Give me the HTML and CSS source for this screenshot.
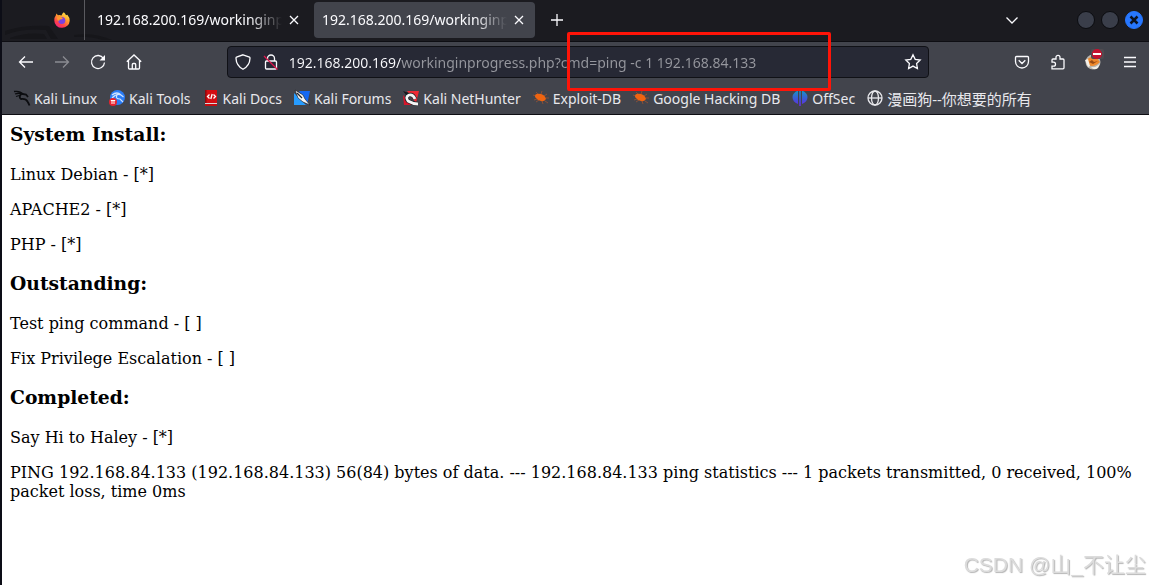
FILE: index.html
```
<!DOCTYPE html>
<html lang="en">
<head>
    <meta charset="UTF-8">
    <meta name="viewport" content="width=device-width, initial-scale=1.0">
    <title>192.168.200.169/workinginprogress.php</title>
    <link rel="stylesheet" href="styles.css">
</head>
<body>
    <div class="window">
        <!-- Tab bar -->
        <div class="tabbar">
            <svg class="wallpaper" width="110" height="16" viewBox="0 0 110 16" aria-hidden="true">
                <path d="M3 6Q20 0 47 1L56 14H49L44 5Q22 3 3 10zM8 13Q24 7 42 9L45 14H8zM72 10Q92 7 110 15H100Q88 11 72 12z"/>
            </svg>
            <button class="firefox-view" aria-label="Firefox View">
                <svg width="16" height="16" viewBox="0 0 16 16">
                    <defs>
                        <linearGradient id="fire" x1="0.8" y1="0" x2="0.2" y2="1">
                            <stop offset="0" stop-color="#fff04a"/>
                            <stop offset="0.4" stop-color="#ff9a2e"/>
                            <stop offset="0.75" stop-color="#ff3d4c"/>
                            <stop offset="1" stop-color="#f0208c"/>
                        </linearGradient>
                    </defs>
                    <path fill="url(#fire)" d="M9.800.200Q11.500 1.500 12 3.200L13.300 2.800Q15.800 5.500 15.700 8.800A7.700 7.200 0 0 1 .300 8.500Q.200 5.300 2 3L2.300 1.600L4 3.200Q6 2.700 7.500 3.600Q8 1.500 9.800.200z"/>
                    <circle cx="7.800" cy="8.600" r="3.500" fill="#7a42e0"/>
                    <path fill="#ff9a2e" d="M2.800 5.500Q5 4.300 7.500 5.300L9 6.300Q7.500 7.800 6 7.600Q5 7.800 5.200 9.200Q3 8.500 2.800 5.500z"/>
                </svg>
            </button>
            <div class="tabs">
                <div class="tab">
                    <span class="tab-title">192.168.200.169/workinginprogress.php</span>
                    <button class="tab-close" aria-label="Close tab"><svg width="10" height="10" viewBox="0 0 10 10"><path d="M1 1L9 9M9 1L1 9"/></svg></button>
                </div>
                <div class="tab selected">
                    <span class="tab-title">192.168.200.169/workinginprogress.php</span>
                    <button class="tab-close" aria-label="Close tab"><svg width="10" height="10" viewBox="0 0 10 10"><path d="M1 1L9 9M9 1L1 9"/></svg></button>
                </div>
            </div>
            <button class="icon-btn" aria-label="New tab"><svg width="14" height="14" viewBox="0 0 14 14"><path d="M7 1V13M1 7H13"/></svg></button>
            <button class="icon-btn all-tabs" aria-label="List all tabs"><svg width="14" height="14" viewBox="0 0 14 14"><path d="M1.500 4.500L7 10L12.500 4.500"/></svg></button>
            <div class="window-buttons">
                <button class="round" aria-label="Minimize"></button>
                <button class="round" aria-label="Maximize"></button>
                <button class="round close" aria-label="Close"><svg width="10" height="10" viewBox="0 0 10 10"><path d="M1.500 1.500L8.500 8.500M8.500 1.500L1.500 8.500"/></svg></button>
            </div>
        </div>

        <!-- Navigation -->
        <div class="navbar">
            <button class="icon-btn" aria-label="Back"><svg width="16" height="16" viewBox="0 0 16 16"><path d="M15 8H1.500M7 2.500L1.500 8L7 13.500"/></svg></button>
            <button class="icon-btn" aria-label="Forward" disabled><svg width="16" height="16" viewBox="0 0 16 16"><path d="M1 8H14.500M9 2.500L14.500 8L9 13.500"/></svg></button>
            <button class="icon-btn" aria-label="Reload"><svg width="16" height="16" viewBox="0 0 16 16"><path d="M13.500 4.500A6.500 6.500 0 1 0 14.500 8.500"/><path class="solid" d="M15 1V6.500H9.500z"/></svg></button>
            <button class="icon-btn" aria-label="Home"><svg width="16" height="16" viewBox="0 0 16 16"><path d="M.800 7.800L8 1L15.200 7.800M2.500 6.500V14Q2.500 15 3.500 15H12.500Q13.500 15 13.500 14V6.500M6.300 15V10.500Q6.300 9.500 7.300 9.500H8.700Q9.700 9.500 9.700 10.500V15"/></svg></button>
            <span class="spring"></span>
            <div class="urlbar">
                <svg width="16" height="16" viewBox="0 0 16 16"><path d="M8 .800L14.500 3.200Q15 3.400 15 4.200Q14.800 11.500 8 15.300Q1.200 11.500 1 4.200Q1 3.400 1.500 3.200z"/></svg>
                <svg class="lock" width="16" height="16" viewBox="0 0 16 16"><path d="M4.500 7V4.500A3.500 3.500 0 0 1 11.500 4.500V7M3.500 7H12.500Q13.500 7 13.500 8V14Q13.500 15 12.500 15H3.500Q2.500 15 2.500 14V8Q2.500 7 3.500 7z"/><path class="slash" d="M1 2L14.500 15.500"/></svg>
                <input class="url" type="text" aria-label="Address" value="192.168.200.169/workinginprogress.php?cmd=ping -c 1 192.168.84.133">
                <button class="star" aria-label="Bookmark this page"><svg width="18" height="18" viewBox="0 0 18 18"><path d="M9 1.800L11.200 6.300L16.200 7L12.600 10.500L13.400 15.500L9 13.100L4.600 15.500L5.400 10.500L1.800 7L6.800 6.300z"/></svg></button>
            </div>
            <span class="spring"></span>
            <button class="icon-btn" aria-label="Save to Pocket"><svg width="16" height="16" viewBox="0 0 16 16"><path d="M2.500 2.500H13.500Q14.500 2.500 14.500 3.500V7.500A6.500 6.500 0 0 1 1.500 7.500V3.500Q1.500 2.500 2.500 2.500zM4.700 6.300L8 9.500L11.300 6.300"/></svg></button>
            <button class="icon-btn" aria-label="Extensions"><svg width="16" height="16" viewBox="0 0 16 16"><path d="M2 14.800V12.200H3.500A2 2 0 0 0 3.500 8.200H2V6Q2 5 3 5H6V3.300A2 2 0 0 1 10 3.300V5H13Q14 5 14 6V13.800Q14 14.800 13 14.800z"/></svg></button>
            <button class="icon-btn" aria-label="Proxy add-on">
                <svg class="art" width="20" height="20" viewBox="0 0 20 20">
                    <circle cx="9" cy="10" r="7.500" fill="#b9b5ae"/>
                    <path fill="#f08a2c" d="M3 8Q6 4 12 5L16 10Q12 14 8 14Q4 14 3 8z"/>
                    <path fill="#f4f0e8" d="M1 8L4 7L6 14L4 15zM7 15Q13 16 16 11L14 16Q10 19 7 15z"/>
                    <path fill="#9b4d14" d="M5 10L8 8L10 10L14 9L9 12z"/>
                    <rect x="7" y="-3" width="13" height="10" rx="2" fill="#514b50"/>
                    <circle cx="13" cy="2" r="5" fill="#c5112f"/>
                    <rect x="9" y="1" width="8" height="2" fill="#fff"/>
                </svg>
            </button>
            <button class="icon-btn" aria-label="Menu"><svg width="14" height="14" viewBox="0 0 14 14"><path d="M1 2.500H13M1 7H13M1 11.500H13"/></svg></button>
        </div>

        <!-- Bookmarks -->
        <nav class="bookmarks">
            <a href="#"><svg width="16" height="16" viewBox="0 0 16 16"><path fill="none" stroke="#0c0d10" stroke-width="1.300" d="M0 1.500Q6 .500 9 4M1 4Q5 2.500 9 4M2 6.500L7 5"/><path fill="none" stroke="#0c0d10" stroke-width="1.800" d="M6 3.500L12 4.500L14 7M7 4Q4.500 7.500 7 9Q12 8.500 13.500 11.500Q14.500 13 15.500 15.500"/></svg>Kali Linux</a>
            <a href="#"><svg width="16" height="16" viewBox="0 0 16 16"><circle cx="8.500" cy="7.500" r="7.500" fill="#2a7cf7"/><path fill="none" stroke="#cfe3ff" stroke-width="1.200" d="M3 5Q8 1 12 5M3 8Q8 3 12 5L14.500 7M8 5Q6 9 11 9L14 12"/><circle cx="4" cy="12" r="4" fill="#e8232f"/><path fill="none" stroke="#fff" stroke-width="1" d="M1.800 10.500H6.200M3 10.500V14M5 10.500V14"/></svg>Kali Tools</a>
            <a href="#"><svg width="16" height="16" viewBox="0 0 16 16"><path fill="#d40d12" d="M2 0H14V13H2z"/><path fill="#8e090d" d="M2 0H3.500V13H2z"/><path fill="#d9d6d6" d="M2 13H14V14H2z"/><path fill="#c20c11" d="M2 14H14V16H2z"/><path fill="none" stroke="#fff" stroke-width="1.300" d="M6.500 4.500L4.500 6.500L6.500 8.500M10.500 4.500L12.500 6.500L10.500 8.500M9.200 4L7.800 9"/></svg>Kali Docs</a>
            <a href="#"><svg width="16" height="16" viewBox="0 0 16 16"><path fill="#1668f2" d="M5 1H16L13 15z"/><path fill="#279cff" d="M0 3L12 15H0z"/><path fill="#f5f5f5" stroke="#16181c" stroke-width="0.600" d="M1 0L9 5L11 9L16 15L9 12L4 8z"/><path fill="none" stroke="#20242c" d="M3 3L8 8"/></svg>Kali Forums</a>
            <a href="#"><svg width="16" height="16" viewBox="0 0 16 16"><path fill="#ef2b35" d="M4 1H16L13 13z"/><path fill="#d5162c" d="M0 5L9 15H1z"/><path fill="none" stroke="#17191d" stroke-width="4" d="M15 14Q10 14 5 11Q2 7 6 5Q10 4 12 9"/><path fill="none" stroke="#f4f4f4" stroke-width="2.800" d="M15 14Q10 14 5 11Q2 7 6 5Q10 4 12 9"/><path fill="#17191d" d="M0 1L6 3L3 5z"/></svg>Kali NetHunter</a>
            <a href="#"><svg width="16" height="16" viewBox="0 0 16 16"><path fill="#ef6411" d="M2 5Q4 3 8 4Q12 5 13 9Q11 12 8 11Q4 10 2 7z"/><path fill="none" stroke="#b9582a" stroke-width="0.600" d="M5 4L3 2M8 4L9 1M11 6L14 4M13 8L16 8M12 11L15 13M9 11L10 14M6 10L3 12M4 9L1 10M3 6L0 5"/></svg>Exploit-DB</a>
            <a href="#"><svg width="16" height="16" viewBox="0 0 16 16"><path fill="#ef6411" d="M2 5Q4 3 8 4Q12 5 13 9Q11 12 8 11Q4 10 2 7z"/><path fill="none" stroke="#b9582a" stroke-width="0.600" d="M5 4L3 2M8 4L9 1M11 6L14 4M13 8L16 8M12 11L15 13M9 11L10 14M6 10L3 12M4 9L1 10M3 6L0 5"/></svg>Google Hacking DB</a>
            <a href="#"><svg width="16" height="16" viewBox="0 0 16 16"><defs><linearGradient id="off" x1="0" y1="0" x2="0" y2="1"><stop offset="0" stop-color="#1499c4"/><stop offset="0.600" stop-color="#4052d8"/><stop offset="1" stop-color="#6a2ae0"/></linearGradient></defs><path fill="url(#off)" d="M6 .500V14Q.500 12 .500 7Q.500 3 6 .500zM7.200 0H8.800V16H7.200zM10 .500V14Q15.500 12 15.500 7Q15.500 3 10 .500z"/></svg>OffSec</a>
            <a class="cjk" href="#" lang="zh-CN"><svg class="globe" width="16" height="16" viewBox="0 0 16 16"><circle cx="8" cy="8" r="7"/><ellipse cx="8" cy="8" rx="3.500" ry="7"/><path d="M1 8H15"/></svg>漫画狗--你想要的所有</a>
        </nav>

        <div class="marker"></div>

        <!-- Page content -->
        <main class="page">
            <h3>System Install:</h3>
            <p>Linux Debian - [*]</p>
            <p>APACHE2 - [*]</p>
            <p>PHP - [*]</p>
            <h3>Outstanding:</h3>
            <p>Test ping command - [ ]</p>
            <p>Fix Privilege Escalation - [ ]</p>
            <h3>Completed:</h3>
            <p>Say Hi to Haley - [*]</p>
            <p>PING 192.168.84.133 (192.168.84.133) 56(84) bytes of data. --- 192.168.84.133 ping statistics --- 1 packets transmitted, 0 received, 100% packet loss, time 0ms</p>
        </main>
    </div>
    <div class="watermark" lang="zh-CN">CSDN @山_不让尘</div>
</body>
</html>
```
FILE: styles.css
```
* {
    box-sizing: border-box;
}

body {
    margin: 0;
    background: #fff;
    overflow: hidden;
}

button {
    display: flex;
    align-items: center;
    justify-content: center;
    padding: 0;
    border: 0;
    background: none;
    color: inherit;
}

svg {
    flex: none;
    fill: none;
    stroke: currentColor;
    stroke-width: 1.3;
    overflow: visible;
}

.window {
    position: relative;
    min-height: 100vh;
    border-left: 2px solid #0c0d16;
    color: #fbfbfe;
    font-family: "Noto Sans", "Noto Sans CJK SC", sans-serif;
    font-size: 14px;
}

/* Tab bar */
.tabbar {
    position: relative;
    display: flex;
    align-items: center;
    height: 42px;
    padding: 0 6px 1px 0;
    background: #1b1b20;
    border-bottom: 1px solid #0e0e13;
}

.wallpaper {
    position: absolute;
    left: 0;
    bottom: 0;
    fill: #16161a;
    stroke: none;
}

.firefox-view {
    width: 83px;
    height: 40px;
    padding-left: 37px;
    border-right: 1px solid #5a5a5f;
    position: relative;
}

.firefox-view svg,
.art,
.bookmarks svg {
    stroke: none;
}

.tabs {
    display: flex;
    gap: 4px;
    margin-left: 4px;
}

.tab {
    display: flex;
    align-items: center;
    width: 221px;
    height: 36px;
    padding: 0 4px 0 8px;
    border-radius: 4px;
}

.selected {
    background: #42444c;
}

.tab-title {
    flex: 1;
    overflow: hidden;
    white-space: nowrap;
    line-height: 20px;
    -webkit-mask-image: linear-gradient(to left, transparent, #000 32px);
    mask-image: linear-gradient(to left, transparent, #000 32px);
}

.tab-close {
    width: 24px;
    height: 24px;
}

.icon-btn {
    width: 36px;
    height: 36px;
    flex: none;
}

.icon-btn:disabled {
    color: #8b8c92;
}

.tabs + .icon-btn {
    margin-left: 4px;
}

.all-tabs {
    margin-left: auto;
}

.window-buttons {
    display: flex;
    gap: 6px;
    margin-left: 47px;
}

.round {
    width: 18px;
    height: 18px;
    border: 1px solid #0b0c10;
    border-radius: 50%;
    background: #3a3e4a;
}

.close {
    border-color: #2777ff;
    background: #2777ff;
    color: #0c1322;
}

.close svg {
    stroke-width: 2.5;
}

/* Navigation */
.navbar {
    display: flex;
    align-items: center;
    height: 40px;
    padding: 0 1px 0 6px;
    background: #42444c;
}

.spring {
    flex: 76;
}

.solid {
    fill: currentColor;
    stroke: none;
}

.urlbar {
    flex: 700;
    display: flex;
    align-items: center;
    gap: 12px;
    height: 32px;
    padding: 0 6px 0 7px;
    border: 1px solid #101116;
    border-radius: 4px;
    background: #272935;
}

.urlbar .slash {
    stroke: #e2144c;
}

.lock + .url {
    margin-left: -2px;
}

/* The host is brighter than the rest of the address */
.url {
    flex: 1;
    min-width: 0;
    height: 30px;
    padding: 0;
    border: 0;
    outline: 0;
    font: inherit;
    color: transparent;
    background: linear-gradient(to right, #fbfbfe 112px, #96979e 112px);
    -webkit-background-clip: text;
    background-clip: text;
}

.star {
    width: 18px;
    height: 30px;
}

/* Bookmarks */
.bookmarks {
    display: flex;
    gap: 12px;
    height: 33px;
    padding: 0 12px;
    background: #42444c;
    border-bottom: 1px solid #0e0e13;
}

.bookmarks a {
    display: flex;
    align-items: center;
    gap: 4px;
    color: #e8e8ec;
    text-decoration: none;
    white-space: nowrap;
}

.bookmarks .cjk {
    font-size: 15px;
}

.bookmarks .globe {
    stroke: currentColor;
}

.marker {
    position: absolute;
    left: 565px;
    top: 32px;
    width: 264px;
    height: 59px;
    border: 3px solid #ff1408;
    border-radius: 2px;
    pointer-events: none;
}

/* Page content */
.page {
    padding: 8px;
    color: #000;
    font-family: "DejaVu Serif", serif;
    font-size: 16px;
    line-height: 19px;
}

.page h3 {
    margin: 18px 0 20px;
    line-height: 22px;
}

.page h3:first-child {
    margin-top: 0;
}

.page p {
    margin: 16px 0;
}

.watermark {
    position: fixed;
    right: 3px;
    bottom: 4px;
    color: #dcdcdc;
    font-family: "Liberation Sans", "Noto Sans CJK SC", sans-serif;
    font-size: 21px;
    line-height: 32px;
    text-shadow: 1px 1px 1px #b4b4b4;
}
```
